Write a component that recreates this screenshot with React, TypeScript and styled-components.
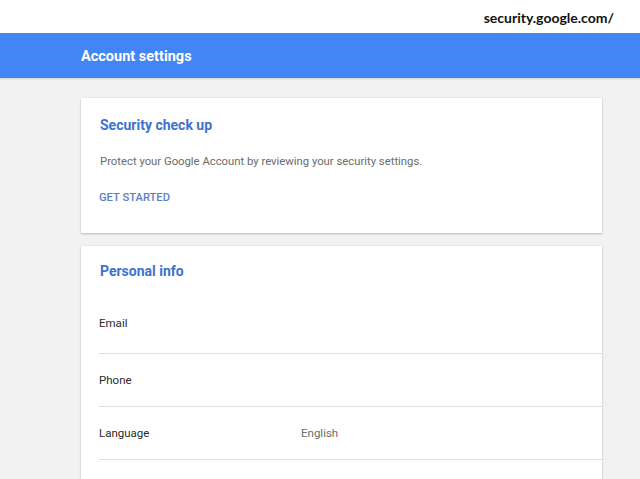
import React from "react";
import styled, { createGlobalStyle } from "styled-components";

const Global = createGlobalStyle`
  html, body { margin: 0; padding: 0; background: #f2f2f2; }
  body { font-family: Roboto, "Liberation Sans", Arial, sans-serif; overflow: hidden; }
  #root { height: 479px; overflow: hidden; }
`;

const Page = styled.div`
  width: 640px;
  height: 479px;
  display: flex;
  flex-direction: column;
  background: #f2f2f2;
  overflow: hidden;
`;

const UrlStrip = styled.div`
  flex-shrink: 0;
  height: 33px;
  background: #ffffff;
  display: flex;
  align-items: center;
  justify-content: flex-end;
  padding: 2px 26px 0 0;
  box-sizing: border-box;
  font-family: Lato, "Open Sans", sans-serif;
  font-weight: 700;
  font-size: 14px;
  color: #111;
`;

const Header = styled.header`
  flex-shrink: 0;
  height: 45px;
  background: #4285f4;
  display: flex;
  align-items: center;
  padding: 2px 0 0 81px;
  box-sizing: border-box;
  color: #fff;
  font-size: 14.5px;
  font-weight: 700;
  box-shadow: 0 1px 2px rgba(0, 0, 0, 0.15);
`;

const Main = styled.main`
  flex-shrink: 0;
  display: flex;
  flex-direction: column;
  gap: 13px;
  padding: 20px 0 0 81px;
  width: 521px;
`;

const Card = styled.section<{ $open?: boolean }>`
  flex-shrink: 0;
  background: #fff;
  box-shadow: 0 1px 2px rgba(0, 0, 0, 0.22), 0 0 1px rgba(0, 0, 0, 0.1);
  display: flex;
  flex-direction: column;
  height: ${(p) => (p.$open ? "auto" : "135px")};
  padding-top: ${(p) => (p.$open ? "15px" : "17px")};
  box-sizing: border-box;
`;

const CardTitle = styled.h2`
  margin: 0 19px;
  font-size: 14px;
  line-height: 20px;
  font-weight: 700;
  color: #3d72cf;
`;

const Desc = styled.p`
  margin: 19px 19px 0;
  font-size: 11.3px;
  line-height: 16px;
  color: #6b6b6b;
`;

const Action = styled.a`
  margin: 20px 18px 0;
  font-size: 11.2px;
  line-height: 16px;
  font-weight: 500;
  color: #5a7fc6;
  text-transform: uppercase;
`;

const Rows = styled.div`
  margin-top: 16px;
  display: flex;
  flex-direction: column;
`;

const Row = styled.div`
  margin-left: 18px;
  display: grid;
  grid-template-columns: 202px 1fr;
  align-items: center;
  height: 53px;
  padding-bottom: 1px;
  border-bottom: 1px solid #dedede;
  box-sizing: border-box;
  &:first-child {
    height: 57px;
    padding-bottom: 5px;
  }
`;

const Label = styled.span`
  font-size: 11.5px;
  font-weight: 400;
  color: #2a2a2a;
`;

const Value = styled.span`
  font-size: 11.5px;
  color: #6b6b6b;
`;

const rows: [string, string][] = [
  ["Email", ""],
  ["Phone", ""],
  ["Language", "English"],
  ["", ""],
];

export default function App() {
  return (
    <Page>
      <Global />
      <UrlStrip>security.google.com/</UrlStrip>
      <Header>Account settings</Header>
      <Main>
        <Card>
          <CardTitle>Security check up</CardTitle>
          <Desc>Protect your Google Account by reviewing your security settings.</Desc>
          <Action>Get started</Action>
        </Card>
        <Card $open>
          <CardTitle>Personal info</CardTitle>
          <Rows>
            {rows.map(([l, v], i) => (
              <Row key={i}>
                <Label>{l}</Label>
                <Value>{v}</Value>
              </Row>
            ))}
          </Rows>
        </Card>
      </Main>
    </Page>
  );
}
